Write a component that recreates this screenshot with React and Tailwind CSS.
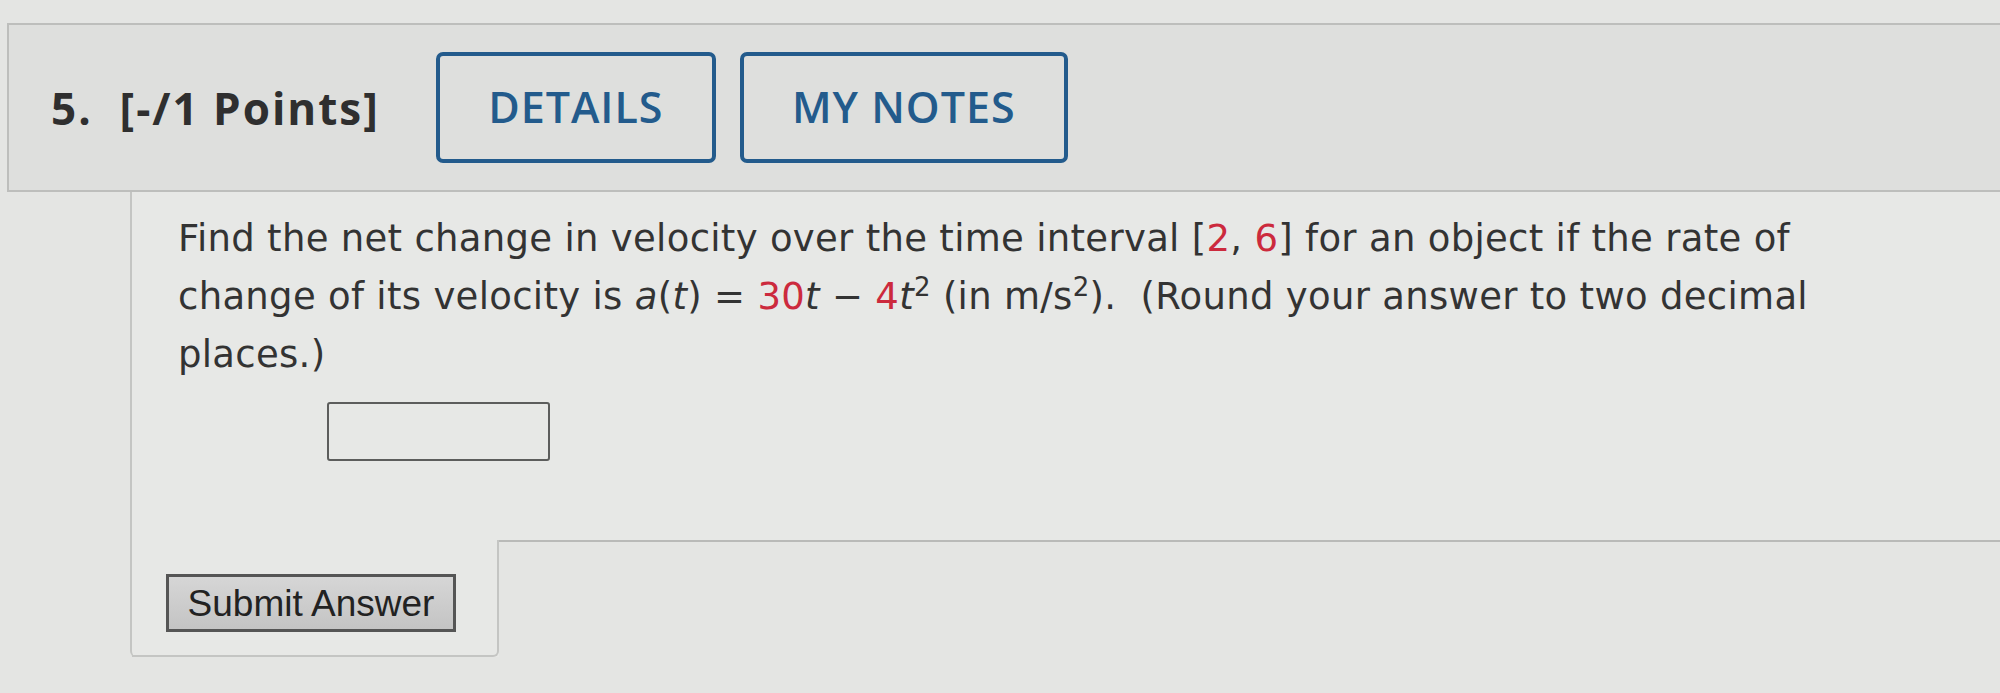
import React from "react";

const bodyFont = { fontFamily: '"DejaVu Sans", Verdana, sans-serif' };
const headFont = { fontFamily: '"Open Sans", "Noto Sans", sans-serif' };

/* ================= HEADER ================= */
const QuestionHeader = () => (
  <div className="ml-[7px] mt-[23px] h-[169px] border-2 border-r-0 border-[#bdbebc] bg-[#dedfdd] flex items-center pl-[42px]">
    <span className="text-[44px] font-bold text-[#2f2f2f] whitespace-nowrap tracking-[2px]" style={headFont}>
      5.&nbsp; [-/1 Points]
    </span>
    <button
      className="ml-[56px] w-[280px] h-[111px] rounded-[7px] border-[4px] border-[#235b8c] text-[#235b8c] text-[43px] font-semibold tracking-[1px]"
      style={headFont}
    >
      DETAILS
    </button>
    <button
      className="ml-[24px] w-[328px] h-[111px] rounded-[7px] border-[4px] border-[#235b8c] text-[#235b8c] text-[43px] font-semibold tracking-[1px]"
      style={headFont}
    >
      MY NOTES
    </button>
  </div>
);

const Red = ({ children }) => <span className="text-[#cc2a3d]">{children}</span>;

/* ================= BODY ================= */
const QuestionBody = () => (
  <div className="ml-[130px] border-l-2 border-[#c4c5c3] rounded-bl-[6px] bg-[#e7e8e6]">
    <div className="pl-[46px] pt-[18px] text-[37px] leading-[58px] text-[#333333] whitespace-nowrap tracking-[0.3px]" style={bodyFont}>
      Find the net change in velocity over the time interval [<Red>2</Red>, <Red>6</Red>] for an object if the rate of
      <br />
      change of its velocity is <i>a</i>(<i>t</i>) = <Red>30</Red><i>t</i> − <Red>4</Red><i>t</i>
      <sup className="text-[26px]">2</sup> (in m/s<sup className="text-[26px]">2</sup>).&nbsp; (Round your answer to two decimal
      <br />
      places.)
    </div>

    <div className="pl-[195px] pt-[18px]">
      <div className="w-[223px] h-[59px] border-2 border-[#5c5d5c] rounded-[3px]" />
    </div>

    <div className="mt-[79px] flex">
      <div className="w-[367px] h-[117px] border-b-2 border-r-2 border-[#c4c5c3] rounded-br-[6px] pl-[34px] pt-[34px]">
        <button
          className="w-[290px] h-[58px] border-[3px] border-[#555555] bg-gradient-to-b from-[#d6d6d6] to-[#c4c4c4] text-[37px] text-[#222222] leading-none"
          style={{ fontFamily: '"Liberation Sans", Arial, sans-serif' }}
        >
          Submit Answer
        </button>
      </div>
      <div className="flex-1 border-t-2 border-[#b9bab8] bg-[#e4e5e3]" />
    </div>
  </div>
);

const App = () => {
  return (
    <div className="w-[2000px] h-[693px] overflow-hidden bg-[#e4e5e3]">
      <QuestionHeader />
      <QuestionBody />
    </div>
  );
};

export default App;
